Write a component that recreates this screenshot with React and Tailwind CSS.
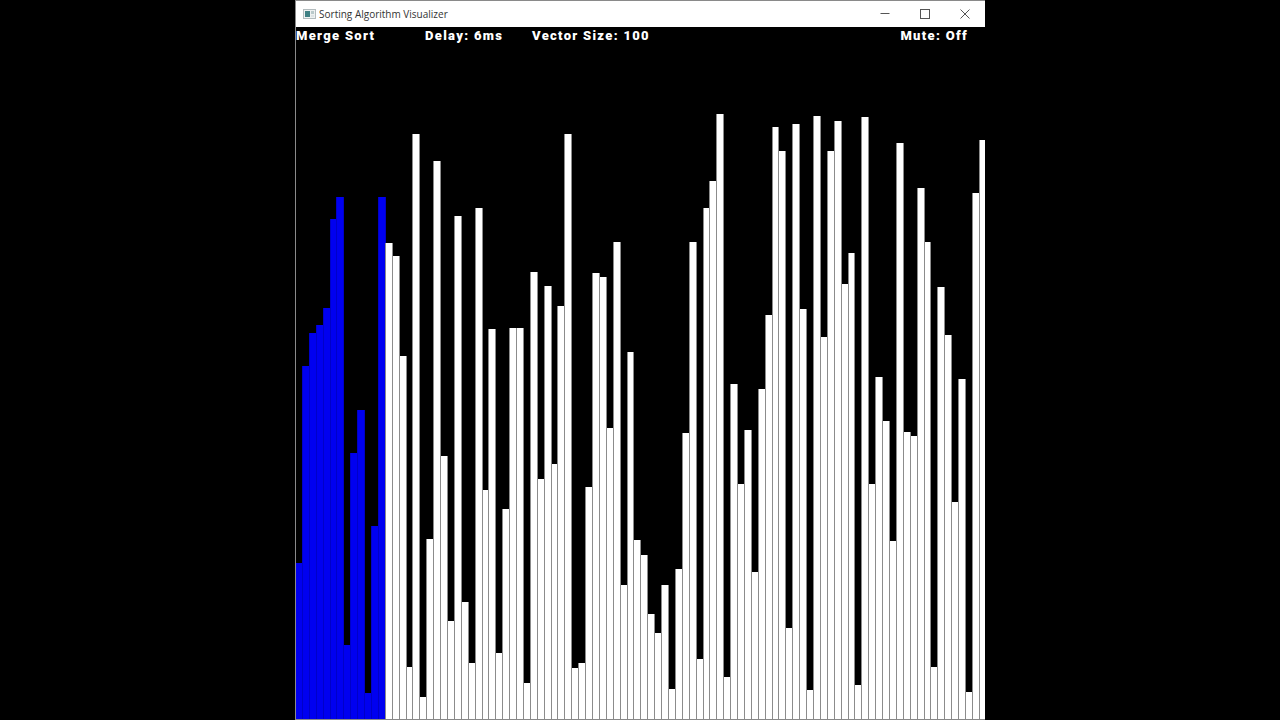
import clsx from "clsx";

const CHART_HEIGHT = 675;
const SORTED_COUNT = 13;

const values = [
  156, 353, 386, 394, 411, 500, 522, 74, 266, 309,
  26, 193, 522, 476, 463, 363, 52, 585, 22, 180,
  558, 263, 98, 503, 117, 56, 511, 229, 390, 66,
  210, 391, 391, 36, 447, 240, 433, 255, 413, 585,
  51, 56, 232, 446, 442, 291, 477, 134, 367, 179,
  164, 105, 86, 134, 30, 150, 286, 477, 60, 511,
  538, 605, 42, 335, 235, 289, 147, 330, 404, 592,
  568, 91, 595, 410, 29, 603, 382, 568, 598, 435,
  466, 34, 602, 235, 342, 298, 178, 576, 287, 283,
  531, 477, 52, 432, 384, 217, 340, 27, 526, 579,
];

const AppIcon = () => (
  <svg width="13" height="11" viewBox="0 0 13 11" aria-hidden="true">
    <rect x="0.5" y="0.5" width="12" height="9" fill="#eef1f1" stroke="#b3bcbe" />
    <rect x="2" y="2" width="5" height="6" fill="#3f8084" />
    <rect x="8" y="2" width="3" height="3" fill="#b9c9ca" />
    <rect x="8" y="6" width="3" height="2" fill="#dde3e4" />
  </svg>
);

const TitleBar = () => {
  const button = "w-10 h-full flex justify-center items-center text-[#555]";
  return (
    <header className="h-[26px] shrink-0 bg-white flex items-center pl-[7px]">
      <AppIcon />
      <h1 className="pl-[3px] text-[10px] leading-4 text-[#333] whitespace-nowrap font-['Open_Sans',sans-serif]">
        Sorting Algorithm Visualizer
      </h1>
      <div className="ml-auto h-full flex">
        <button type="button" aria-label="Minimize" className={button}>
          <svg width="10" height="10" viewBox="0 0 10 10" fill="none" stroke="currentColor">
            <path d="M0.5 4.5H9.5" />
          </svg>
        </button>
        <button type="button" aria-label="Maximize" className={button}>
          <svg width="10" height="10" viewBox="0 0 10 10" fill="none" stroke="currentColor">
            <rect x="0.5" y="0.5" width="9" height="9" />
          </svg>
        </button>
        <button type="button" aria-label="Close" className={button}>
          <svg width="10" height="10" viewBox="0 0 10 10" fill="none" stroke="currentColor">
            <path d="M0.5 0.5L9.5 9.5M9.5 0.5L0.5 9.5" />
          </svg>
        </button>
      </div>
    </header>
  );
};

const StatusBar = () => (
  <div className="h-[17px] shrink-0 flex text-white text-[13px] leading-[18px] font-black tracking-widest whitespace-nowrap font-[Roboto,sans-serif]">
    <span className="w-[129px]">Merge Sort</span>
    <span className="w-[107px]">Delay: 6ms</span>
    <span>Vector Size: 100</span>
    <span className="ml-auto pr-[17px]">Mute: Off</span>
  </div>
);

const Bars = () => (
  <div className="flex-1 min-h-0 flex items-end overflow-hidden border-b border-[#888]">
    {values.map((value, i) => (
      <div
        key={i}
        className={clsx(
          "flex-1 -mr-px first:-ml-px border-x",
          i < SORTED_COUNT ? "bg-[#0000f0] border-[#0000c8]" : "bg-white border-[#8c8c8c]"
        )}
        style={{ height: `${(value / CHART_HEIGHT) * 100}%` }}
      />
    ))}
  </div>
);

const App = () => {
  return (
    <div className="h-screen bg-black flex justify-center">
      <main className="w-[53.9%] h-full flex flex-col border-l border-t border-[#8a8a8a]">
        <TitleBar />
        <StatusBar />
        <Bars />
      </main>
    </div>
  );
};

export default App;
